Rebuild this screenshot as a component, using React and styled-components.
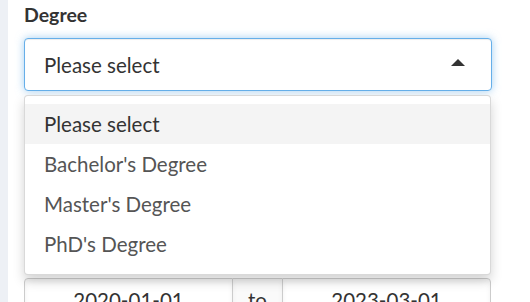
import styled, { createGlobalStyle } from 'styled-components'

const GlobalStyle = createGlobalStyle`
  html, body {
    margin: 0;
    padding: 0;
    background: #ffffff;
    font-family: Lato, "Liberation Sans", sans-serif;
    color: #333333;
  }
  * { box-sizing: border-box; }
`

const S = {}

const options = ['Please select', "Bachelor's Degree", "Master's Degree", "PhD's Degree"]

const App = () => {
  return (
    <>
      <GlobalStyle />
      <S.Page>
        <S.Sidebar />
        <S.Panel>
          <S.Group>
            <S.Label>Degree</S.Label>
            <S.SelectWrap>
              <S.Select>
                <span>Please select</span>
                <S.Caret />
              </S.Select>
              <S.Menu>
                {options.map((opt, idx) => (
                  <S.Option key={opt} active={idx === 0}>{opt}</S.Option>
                ))}
              </S.Menu>
            </S.SelectWrap>
          </S.Group>
          <S.DateRange>
            <S.DateInput>2020-01-01</S.DateInput>
            <S.Addon>to</S.Addon>
            <S.DateInput>2023-03-01</S.DateInput>
          </S.DateRange>
        </S.Panel>
      </S.Page>
    </>
  )
}

export default App

S.Page = styled.div`
  display: flex;
  width: 530px;
  height: 302px;
  overflow: hidden;
`
S.Sidebar = styled.div`
  width: 8px;
  flex-shrink: 0;
  background: #edf0f5;
`
S.Panel = styled.div`
  flex: 1;
  padding: 4px 0 0 16px;
`
S.Group = styled.div`
  width: 468px;
  margin-bottom: 187px;
`
S.Label = styled.div`
  font-weight: 700;
  font-size: 19.5px;
  line-height: 22px;
  margin-bottom: 12px;
  color: #333333;
`
S.SelectWrap = styled.div`
  position: relative;
`
S.Select = styled.div`
  display: flex;
  align-items: center;
  justify-content: space-between;
  height: 53px;
  padding: 0 26px 0 19px;
  border: 1px solid #66afe9;
  border-radius: 4px;
  box-shadow: inset 0 1px 1px rgba(0, 0, 0, 0.075), 0 0 8px rgba(102, 175, 233, 0.6);
  font-size: 20.5px;
  color: #333333;
  background: #fff;
`
S.Caret = styled.span`
  width: 0;
  height: 0;
  border-left: 7px solid transparent;
  border-right: 7px solid transparent;
  border-bottom: 7px solid #333333;
  margin-top: -4px;
`
S.Menu = styled.div`
  position: absolute;
  z-index: 10;
  top: 57px;
  left: 0;
  right: 1px;
  padding: 8px 0 10px;
  background: #fff;
  border: 1px solid rgba(0, 0, 0, 0.15);
  border-radius: 4px;
  box-shadow: 0 6px 12px rgba(0, 0, 0, 0.175);
`
S.Option = styled.div`
  height: 40px;
  display: flex;
  align-items: center;
  padding-left: 19px;
  font-size: 20.5px;
  color: ${({ active }) => active ? '#333333' : '#555555'};
  background: ${({ active }) => active ? '#f4f4f4' : 'transparent'};
`
S.DateRange = styled.div`
  display: flex;
  width: 467px;
  height: 44px;
`
S.DateInput = styled.div`
  flex: 1;
  display: flex;
  align-items: center;
  justify-content: center;
  border: 1px solid #cccccc;
  border-radius: 4px;
  background: #fff;
  box-shadow: inset 0 3px 5px rgba(0, 0, 0, 0.06);
  font-size: 20.5px;
  color: #333333;
  &:first-child { border-top-right-radius: 0; border-bottom-right-radius: 0; }
  &:last-child { border-top-left-radius: 0; border-bottom-left-radius: 0; }
`
S.Addon = styled.div`
  width: 49px;
  display: flex;
  align-items: center;
  justify-content: center;
  background: #fafafa;
  border-top: 1px solid #cccccc;
  border-bottom: 1px solid #cccccc;
  box-shadow: inset 0 3px 5px rgba(0, 0, 0, 0.05);
  font-size: 20.5px;
  color: #333333;
`
